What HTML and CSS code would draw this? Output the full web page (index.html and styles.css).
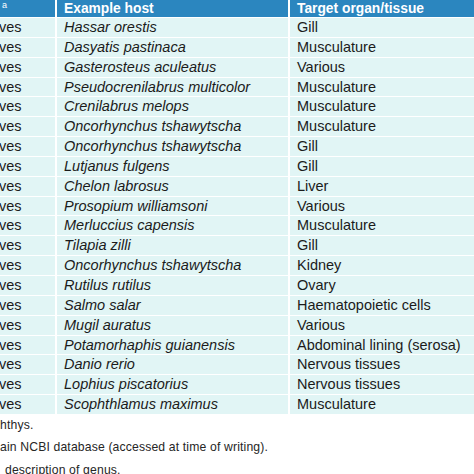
FILE: index.html
```html
<!DOCTYPE html>
<html>
<head>
<meta charset="utf-8">
<link rel="stylesheet" href="styles.css">
</head>
<body>
<div class="page">
<table class="tbl">
<thead>
<tr><th class="c1"><sup class="sup">a</sup></th><th class="c2">Example host</th><th class="c3">Target organ/tissue</th></tr>
</thead>
<tbody>
<tr><td class="c1">ves</td><td class="c2 sp">Hassar orestis</td><td class="c3">Gill</td></tr>
<tr><td class="c1">ves</td><td class="c2 sp">Dasyatis pastinaca</td><td class="c3">Musculature</td></tr>
<tr><td class="c1">ves</td><td class="c2 sp">Gasterosteus aculeatus</td><td class="c3">Various</td></tr>
<tr><td class="c1">ves</td><td class="c2 sp">Pseudocrenilabrus multicolor</td><td class="c3">Musculature</td></tr>
<tr><td class="c1">ves</td><td class="c2 sp">Crenilabrus melops</td><td class="c3">Musculature</td></tr>
<tr><td class="c1">ves</td><td class="c2 sp">Oncorhynchus tshawytscha</td><td class="c3">Musculature</td></tr>
<tr><td class="c1">ves</td><td class="c2 sp">Oncorhynchus tshawytscha</td><td class="c3">Gill</td></tr>
<tr><td class="c1">ves</td><td class="c2 sp">Lutjanus fulgens</td><td class="c3">Gill</td></tr>
<tr><td class="c1">ves</td><td class="c2 sp">Chelon labrosus</td><td class="c3">Liver</td></tr>
<tr><td class="c1">ves</td><td class="c2 sp">Prosopium williamsoni</td><td class="c3">Various</td></tr>
<tr><td class="c1">ves</td><td class="c2 sp">Merluccius capensis</td><td class="c3">Musculature</td></tr>
<tr><td class="c1">ves</td><td class="c2 sp">Tilapia zilli</td><td class="c3">Gill</td></tr>
<tr><td class="c1">ves</td><td class="c2 sp">Oncorhynchus tshawytscha</td><td class="c3">Kidney</td></tr>
<tr><td class="c1">ves</td><td class="c2 sp">Rutilus rutilus</td><td class="c3">Ovary</td></tr>
<tr><td class="c1">ves</td><td class="c2 sp">Salmo salar</td><td class="c3">Haematopoietic cells</td></tr>
<tr><td class="c1">ves</td><td class="c2 sp">Mugil auratus</td><td class="c3">Various</td></tr>
<tr><td class="c1">ves</td><td class="c2 sp">Potamorhaphis guianensis</td><td class="c3">Abdominal lining (serosa)</td></tr>
<tr><td class="c1">ves</td><td class="c2 sp">Danio rerio</td><td class="c3">Nervous tissues</td></tr>
<tr><td class="c1">ves</td><td class="c2 sp">Lophius piscatorius</td><td class="c3">Nervous tissues</td></tr>
<tr><td class="c1">ves</td><td class="c2 sp">Scophthlamus maximus</td><td class="c3">Musculature</td></tr>
</tbody>
</table>
<div class="notes">
<p class="note">hthys.</p>
<p class="note">ain NCBI database (accessed at time of writing).</p>
<p class="note indent">description of genus.</p>
</div>
</div>
</body>
</html>
```

FILE: styles.css
```css
html, body {
  margin: 0;
  padding: 0;
  background: #ffffff;
}
body {
  width: 474px;
  height: 474px;
  overflow: hidden;
  font-family: "Liberation Sans", Arial, sans-serif;
  color: #1b1b1b;
}
.page {
  width: 474px;
}
.tbl {
  width: 474px;
  border-collapse: collapse;
  table-layout: fixed;
}
.tbl th {
  background: #2b86bf;
  color: #ffffff;
  font-weight: bold;
  font-size: 13.8px;
  height: 16px;
  line-height: 16px;
  padding: 0 0 0 7px;
  text-align: left;
  border-bottom: 1px solid #ffffff;
  vertical-align: middle;
}
.tbl td {
  background: #e1f5f5;
  font-size: 14.5px;
  height: 18.85px;
  line-height: 18.85px;
  padding: 0 0 0 7px;
  border-bottom: 1px solid #ffffff;
  white-space: nowrap;
  overflow: hidden;
  vertical-align: middle;
}
.tbl .c1 {
  width: 55px;
  padding-left: 0;
  text-indent: -1px;
}
.tbl .c2 {
  width: 224px;
  border-left: 2px solid #ffffff;
}
.tbl .c3 {
  border-left: 2px solid #ffffff;
  padding-left: 7px;
}
.sp {
  font-style: italic;
}
.sup {
  font-size: 9px;
  font-weight: normal;
  position: relative;
  top: -4px;
  margin-left: 3px;
  vertical-align: baseline;
}
.notes {
  margin-top: -1px;
}
.note {
  margin: 0;
  font-size: 12.2px;
  line-height: 22.5px;
  color: #262626;
  letter-spacing: 0.15px;
}
.indent {
  padding-left: 5px;
}
```
